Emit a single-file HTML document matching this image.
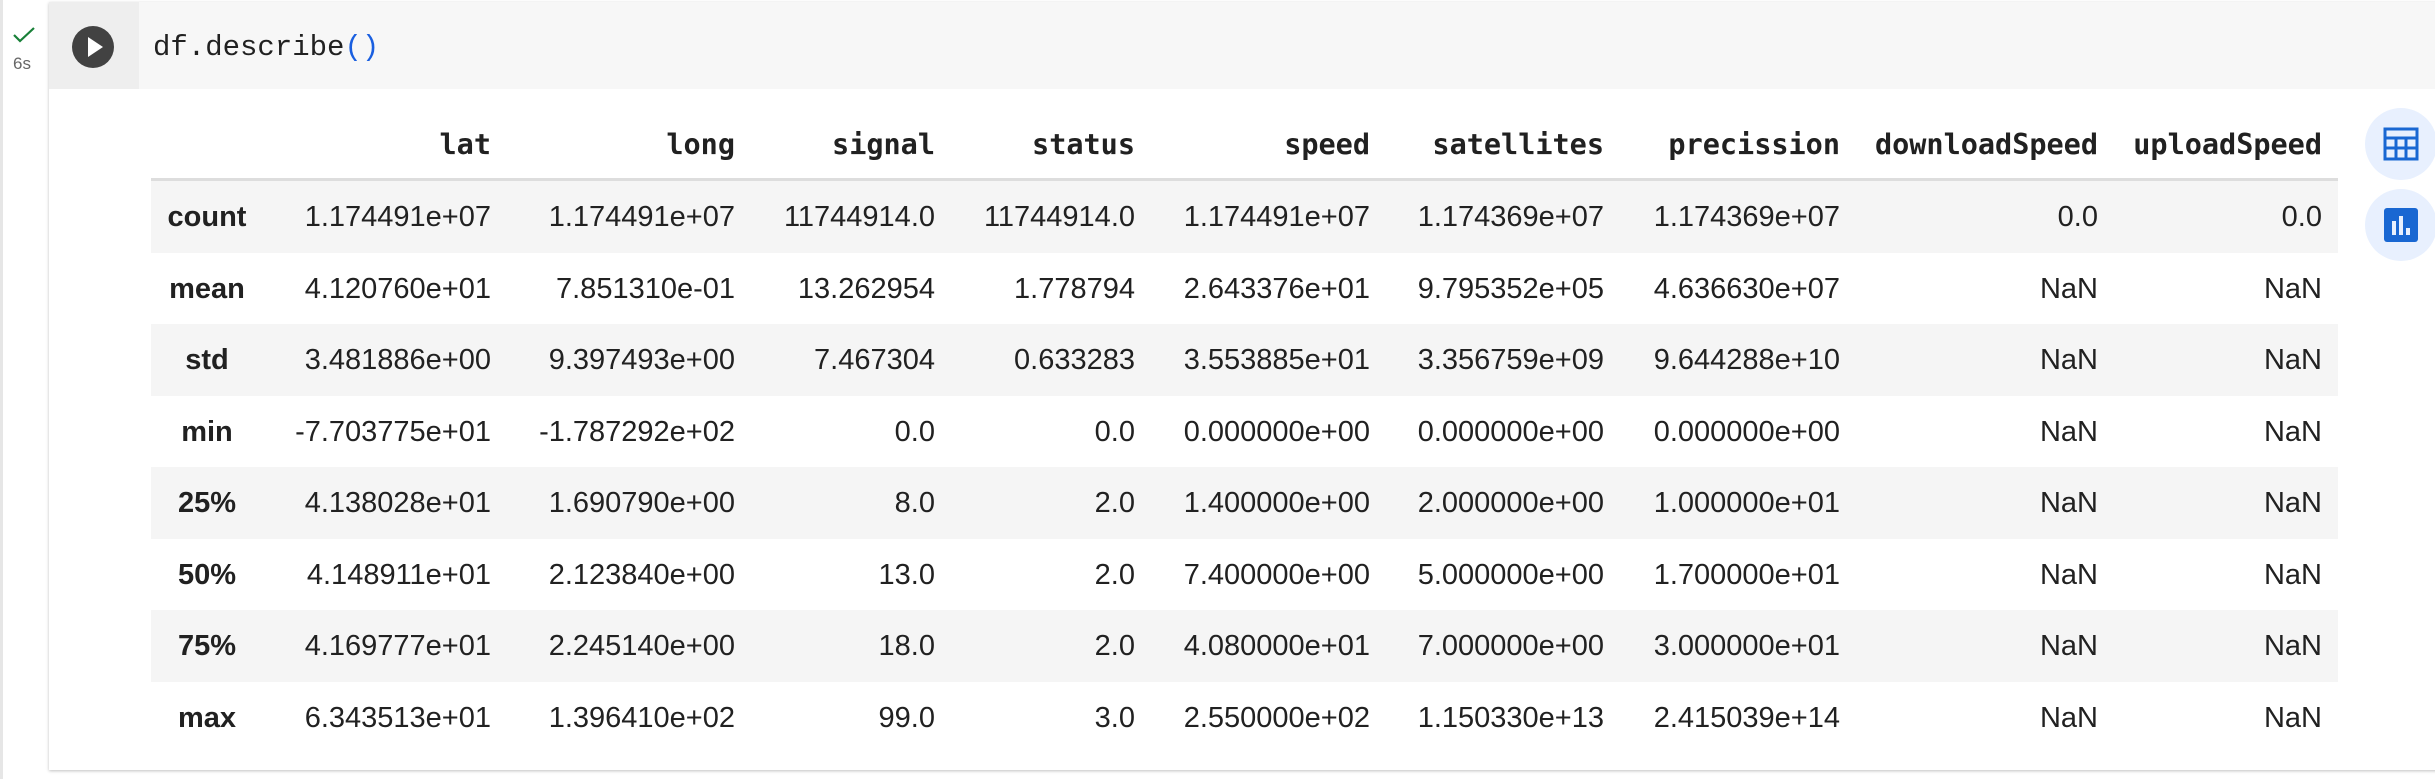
<!DOCTYPE html>
<html><head><meta charset="utf-8"><style>
*{margin:0;padding:0;box-sizing:border-box}
body{width:2435px;height:779px;background:#fff;position:relative;overflow:hidden;font-family:"Liberation Sans",sans-serif;color:#212121}
.lb{position:absolute;left:0;top:0;width:3px;height:779px;background:#e6e6e6}
.cell{position:absolute;left:49px;top:2px;width:2400px;height:768px;background:#fff;box-shadow:0 1px 3px rgba(0,0,0,.25)}
.code{position:absolute;left:49px;top:2px;width:2400px;height:87px;background:#f7f7f7}
.gut{position:absolute;left:49px;top:2px;width:90px;height:87px;background:#eeeeee}
.play{position:absolute;left:72px;top:26px;width:42px;height:42px;border-radius:50%;background:#424242}
.codetxt{position:absolute;left:153px;top:31px;font:29px "Liberation Mono",monospace;color:#212121}
.row{position:absolute;left:151px;width:2187px;height:71.5px}
.g{background:#f5f5f5}
.t{position:absolute;font-size:29px;line-height:30px;white-space:nowrap}
.h{font:bold 28.5px "DejaVu Sans Mono",monospace;line-height:30px;position:absolute;white-space:nowrap}
.ix{font-weight:bold;left:157px;width:100px;text-align:center}
.ic{position:absolute;left:2365px;width:72px;height:72px;border-radius:50%;background:#e8f0fe}
</style></head><body>
<div class="lb"></div>
<svg style="position:absolute;left:12px;top:26px" width="24" height="18" viewBox="0 0 24 18"><path d="M2 9 L8 15 L22 2" fill="none" stroke="#188038" stroke-width="2.2"/></svg>
<div style="position:absolute;left:13px;top:54px;font-size:17px;color:#666">6s</div>
<div class="cell"></div>
<div class="code"></div>
<div class="gut"></div>
<div class="play"><svg width="42" height="42"><path d="M16 11 L31 21 L16 31 Z" fill="#fff"/></svg></div>
<div class="codetxt">df.describe<span style="color:#1a5fe0">()</span></div>
<div class="ic" style="top:108px"><svg style="position:absolute;left:17px;top:17px" width="38" height="38" viewBox="0 0 38 38"><rect x="3" y="4" width="32" height="30" fill="none" stroke="#1967d2" stroke-width="3"/><path d="M3 13H35M3 23H35M14 13V34M24 13V34" stroke="#1967d2" stroke-width="3"/></svg></div>
<div class="ic" style="top:189px"><svg style="position:absolute;left:17px;top:17px" width="38" height="38" viewBox="0 0 38 38"><rect x="2" y="2" width="34" height="34" rx="3" fill="#1967d2"/><rect x="10" y="15" width="4" height="14" fill="#e8f0fe"/><rect x="17" y="10" width="4" height="19" fill="#e8f0fe"/><rect x="24" y="22" width="4" height="7" fill="#e8f0fe"/></svg></div>
<div id="tb"></div>
<div style="position:absolute;left:151px;top:178px;width:2187px;height:3px;background:#ddd"></div>
<script>
(function(){
var R=[491,735,935,1135,1370,1604,1840,2098,2322];
var H=["lat","long","signal","status","speed","satellites","precission","downloadSpeed","uploadSpeed"];
var D=[["count","1.174491e+07","1.174491e+07","11744914.0","11744914.0","1.174491e+07","1.174369e+07","1.174369e+07","0.0","0.0"],
["mean","4.120760e+01","7.851310e-01","13.262954","1.778794","2.643376e+01","9.795352e+05","4.636630e+07","NaN","NaN"],
["std","3.481886e+00","9.397493e+00","7.467304","0.633283","3.553885e+01","3.356759e+09","9.644288e+10","NaN","NaN"],
["min","-7.703775e+01","-1.787292e+02","0.0","0.0","0.000000e+00","0.000000e+00","0.000000e+00","NaN","NaN"],
["25%","4.138028e+01","1.690790e+00","8.0","2.0","1.400000e+00","2.000000e+00","1.000000e+01","NaN","NaN"],
["50%","4.148911e+01","2.123840e+00","13.0","2.0","7.400000e+00","5.000000e+00","1.700000e+01","NaN","NaN"],
["75%","4.169777e+01","2.245140e+00","18.0","2.0","4.080000e+01","7.000000e+00","3.000000e+01","NaN","NaN"],
["max","6.343513e+01","1.396410e+02","99.0","3.0","2.550000e+02","1.150330e+13","2.415039e+14","NaN","NaN"]];
var s="";
for(var i=0;i<9;i++)s+='<div class="h" style="top:130px;right:'+(2435-R[i])+'px">'+H[i]+'</div>';
for(var r=0;r<8;r++){var yy=181+r*71.5;
if(r%2==0)s+='<div class="row g" style="top:'+yy+'px"></div>';
var ty=yy+21;
s+='<div class="t ix" style="top:'+ty+'px">'+D[r][0]+'</div>';
for(var c=0;c<9;c++)s+='<div class="t" style="top:'+ty+'px;right:'+(2435-R[c])+'px">'+D[r][c+1]+'</div>';}
document.getElementById("tb").innerHTML=s;
})();
</script>
</body></html>
